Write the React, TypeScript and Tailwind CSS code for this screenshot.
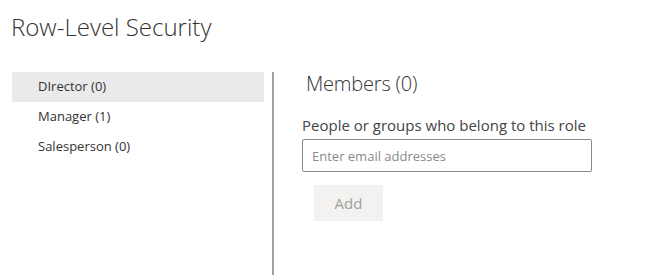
import React from "react";

const roles = [
  { name: "DIrector (0)", selected: true },
  { name: "Manager (1)", selected: false },
  { name: "Salesperson (0)", selected: false },
];

export default function App() {
  return (
    <div
      className="w-[670px] h-[275px] bg-white overflow-hidden text-[#333]"
      style={{ fontFamily: '"Open Sans", "Noto Sans", sans-serif' }}
    >
      <h1 className="pl-[11px] pt-[10px] text-[24px] leading-[33px] font-light text-[#333]">
        Row-Level Security
      </h1>
      <div className="flex mt-[29px]">
        <ul className="w-[252px] ml-[12px]">
          {roles.map((r) => (
            <li
              key={r.name}
              className={
                "h-[30px] pl-[26px] flex items-center text-[13px] text-[#333] " +
                (r.selected ? "bg-[#eaeaea]" : "")
              }
            >
              {r.name}
            </li>
          ))}
        </ul>
        <div className="ml-[8px] w-[2px] h-[203px] bg-[#a0a0a0]" />
        <div className="ml-[28px] flex flex-col">
          <h2 className="pl-[4px] text-[20px] leading-[26px] font-light text-[#333] mt-[-1px] tracking-[-0.2px]">
            Members (0)
          </h2>
          <label className="mt-[18px] text-[15px] leading-[21px] text-[#444]">
            People or groups who belong to this role
          </label>
          <input
            className="mt-[3px] w-[290px] h-[33px] border border-[#8a8886] rounded-[2px] px-[9px] text-[13px] placeholder:text-[#8a8a8a] outline-none"
            placeholder="Enter email addresses"
          />
          <button className="mt-[13px] ml-[12px] w-[69px] h-[36px] bg-[#f3f2f1] text-[15px] text-[#a19f9d]">
            Add
          </button>
        </div>
      </div>
    </div>
  );
}
